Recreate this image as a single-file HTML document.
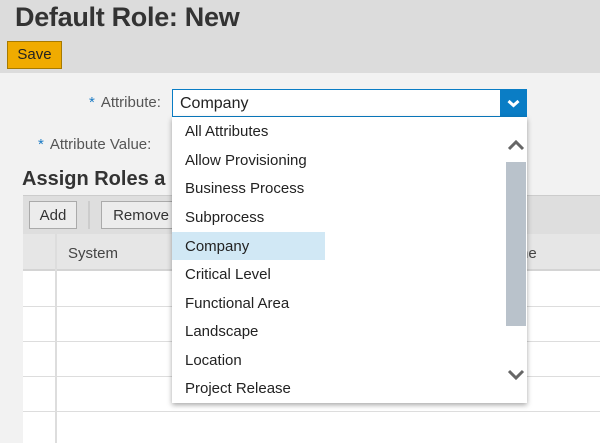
<!DOCTYPE html>
<html><head><meta charset="utf-8"><style>
*{margin:0;padding:0;box-sizing:border-box}
body{width:600px;height:443px;overflow:hidden;background:#f2f2f2;font-family:"Liberation Sans",Arial,sans-serif;position:relative;color:#333}
.abs{position:absolute}
#hdr{left:0;top:0;width:600px;height:73px;background:#dcdcdc}
h1{position:absolute;left:15px;top:2px;font-size:27px;font-weight:bold;color:#333;letter-spacing:-0.3px}
#save{left:7px;top:41px;width:55px;height:28px;background:#f0ab00;border:1px solid #a77a00;font-size:15px;line-height:26px;text-align:center;color:#222}
.lbl{font-size:15px;color:#555;white-space:nowrap}
.star{color:#1a7ac4;margin-right:6px}
h2{position:absolute;left:22px;top:168px;font-size:20px;font-weight:bold;color:#333}
#tbl{left:23px;top:195px;width:577px;height:248px;background:#fff}
#tb{left:23px;top:195px;width:577px;height:39px;background:#dedede;border-top:1px solid #ccc}
.btn{position:absolute;top:201px;height:28px;background:#ececec;border:1px solid #aaa;font-size:15px;line-height:27px;text-align:center;color:#333}
#th{left:23px;top:234px;width:577px;height:37px;background:#e6e6e6;border-bottom:2px solid #d4d4d4}
.hl{position:absolute;height:1px;background:#ddd;left:23px;width:577px}
.vl{position:absolute;width:2px;background:#ddd;left:55px;top:234px;height:209px}
#inp{left:172px;top:89px;width:355px;height:29px;background:#fff;border:1px solid #0a7dc5;border-bottom:2px solid #0a7dc5;font-size:16px;line-height:27px;padding-left:7px;color:#222}
#ib{left:500px;top:89px;width:27px;height:29px;background:#0a7dc5}
#list{left:172px;top:117px;width:355px;height:286px;background:#fff;box-shadow:0 2px 5px rgba(0,0,0,.35)}
.it{position:absolute;left:13px;font-size:15px;color:#222;white-space:nowrap}
</style></head><body>
<div id="hdr" class="abs"></div>
<h1>Default Role: New</h1>
<div id="save" class="abs">Save</div>
<div class="abs lbl" style="left:89px;top:94px"><span class="star">*</span>Attribute:</div>
<div class="abs lbl" style="left:38px;top:136px"><span class="star">*</span>Attribute Value:</div>
<h2>Assign Roles a</h2>
<div id="tbl" class="abs"></div>
<div id="tb" class="abs"></div>
<div class="btn" style="left:29px;width:48px">Add</div>
<div class="abs" style="left:88px;top:201px;width:2px;height:28px;background:#ccc"></div>
<div class="btn" style="left:101px;width:80px">Remove</div>
<div id="th" class="abs"></div>
<div class="abs" style="left:68px;top:245px;font-size:15px;color:#444">System</div>
<div class="abs" style="left:520px;top:245px;font-size:15px;color:#444">ne</div>
<div class="hl" style="top:306px"></div>
<div class="hl" style="top:341px"></div>
<div class="hl" style="top:376px"></div>
<div class="hl" style="top:411px"></div>
<div class="vl"></div>
<div id="inp" class="abs">Company</div>
<div id="ib" class="abs"><svg width="27" height="29" viewBox="0 0 27 29"><path d="M8.5 12 L13.5 16.5 L18.5 12" stroke="#fff" stroke-width="3" fill="none"/></svg></div>
<div id="list" class="abs">
<div class="abs" style="left:0;top:115px;width:153px;height:28px;background:#d1e8f5"></div>
<div class="it" style="top:6px">All Attributes</div>
<div class="it" style="top:35px">Allow Provisioning</div>
<div class="it" style="top:63px">Business Process</div>
<div class="it" style="top:92px">Subprocess</div>
<div class="it" style="top:121px">Company</div>
<div class="it" style="top:149px">Critical Level</div>
<div class="it" style="top:178px">Functional Area</div>
<div class="it" style="top:206px">Landscape</div>
<div class="it" style="top:235px">Location</div>
<div class="it" style="top:263px">Project Release</div>
<svg class="abs" style="left:334px;top:20px" width="20" height="16"><path d="M3 12 L10 5 L17 12" stroke="#666" stroke-width="3" fill="none"/></svg>
<div class="abs" style="left:334px;top:45px;width:20px;height:164px;background:#b9c2cb"></div>
<svg class="abs" style="left:334px;top:250px" width="20" height="16"><path d="M3 4 L10 11 L17 4" stroke="#666" stroke-width="3" fill="none"/></svg>
</div>
</body></html>
